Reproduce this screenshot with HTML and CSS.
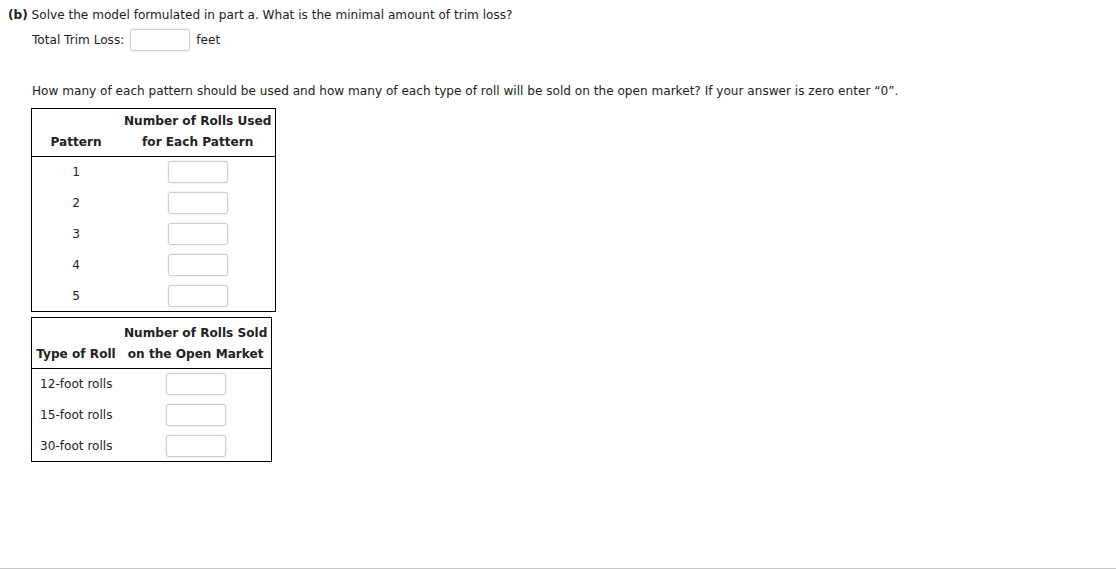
FILE: index.html
```html
<!DOCTYPE html>
<html lang="en">
<head>
    <meta charset="UTF-8" />
    <title>Trim Loss - Part b</title>
    <link rel="stylesheet" href="styles.css">
</head>
<body>
<div class="page">
    <p class="prompt"><strong>(b)</strong> Solve the model formulated in part a. What is the minimal amount of trim loss?</p>

    <div class="answer">
        <div class="field-row">
            <label for="trim">Total Trim Loss:</label>
            <input type="text" id="trim" class="blank" />
            <span>feet</span>
        </div>

        <p class="question">How many of each pattern should be used and how many of each type of roll will be sold on the open market? If your answer is zero enter &ldquo;0&rdquo;.</p>

        <table class="grid pattern-grid">
            <thead>
                <tr>
                    <th class="col-a">Pattern</th>
                    <th>Number of Rolls Used<br>for Each Pattern</th>
                </tr>
            </thead>
            <tbody>
                <tr><td class="center">1</td><td class="center"><input type="text" class="blank" /></td></tr>
                <tr><td class="center">2</td><td class="center"><input type="text" class="blank" /></td></tr>
                <tr><td class="center">3</td><td class="center"><input type="text" class="blank" /></td></tr>
                <tr><td class="center">4</td><td class="center"><input type="text" class="blank" /></td></tr>
                <tr><td class="center">5</td><td class="center"><input type="text" class="blank" /></td></tr>
            </tbody>
        </table>

        <table class="grid roll-grid">
            <thead>
                <tr>
                    <th class="col-a">Type of Roll</th>
                    <th>Number of Rolls Sold<br>on the Open Market</th>
                </tr>
            </thead>
            <tbody>
                <tr><td class="name">12-foot rolls</td><td class="center"><input type="text" class="blank" /></td></tr>
                <tr><td class="name">15-foot rolls</td><td class="center"><input type="text" class="blank" /></td></tr>
                <tr><td class="name">30-foot rolls</td><td class="center"><input type="text" class="blank" /></td></tr>
            </tbody>
        </table>
    </div>
</div>
</body>
</html>
```

FILE: styles.css
```css
body {
    margin: 0;
    font-family: "DejaVu Sans", Verdana, sans-serif;
    font-size: 12.1px;
    color: #222;
    background-color: #fff;
}
.page {
    height: 569px;
    box-sizing: border-box;
    padding: 7px 8px 0 8px;
    border-bottom: 1px solid #c8c8c8;
}
p {
    margin: 0;
    line-height: 16px;
}
.answer {
    margin-left: 24px;
}
.field-row {
    display: flex;
    align-items: center;
    gap: 6px;
    margin-top: 5px;
    height: 24px;
}
.question {
    margin-top: 31px;
}
.blank {
    width: 60px;
    height: 22px;
    box-sizing: border-box;
    margin: 0;
    padding: 0 4px;
    border: 1px solid #cfcfcf;
    border-radius: 3px;
    box-shadow: 0 0 2px #d8d8d8;
    font: inherit;
    background-color: #fff;
}
.grid {
    border-collapse: collapse;
    border: 1px solid #000;
    margin-top: 9px;
    margin-left: -1px;
}
.roll-grid {
    margin-top: 5px;
}
.grid th {
    font-weight: bold;
    vertical-align: bottom;
    line-height: 21px;
    padding: 2px 4px 3px 4px;
    border-bottom: 1px solid #000;
    text-align: center;
    white-space: nowrap;
}
.roll-grid th {
    padding-top: 5px;
}
.grid td {
    height: 31px;
    box-sizing: border-box;
    padding: 0 4px;
    vertical-align: middle;
    white-space: nowrap;
}
.grid .col-a {
    width: 80px;
}
.center {
    text-align: center;
}
.grid td.name {
    padding-left: 8px;
    text-align: left;
}
.grid td .blank {
    vertical-align: middle;
}
```
